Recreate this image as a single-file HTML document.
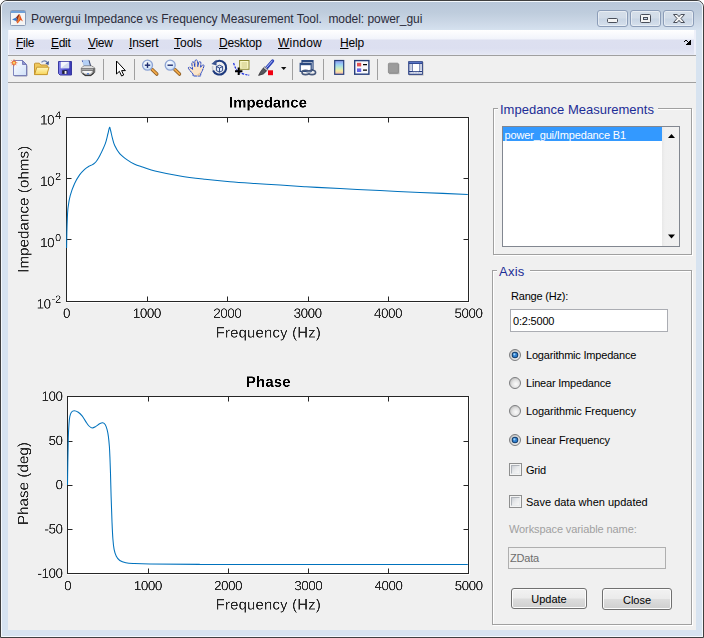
<!DOCTYPE html>
<html>
<head>
<meta charset="utf-8">
<title>Powergui Impedance vs Frequency Measurement Tool</title>
<style>
html,body{margin:0;padding:0;background:#fff;}
body{width:704px;height:638px;position:relative;overflow:hidden;font-family:"Liberation Sans",sans-serif;}
.abs{position:absolute;}
#win{position:absolute;left:0;top:0;width:702px;height:636px;border:1px solid #3f3f3f;border-radius:7px 7px 0 0;
 background:linear-gradient(#b8c7d9 0px,#bfcddd 12px,#ccd8e7 22px,#d7e3f0 30px,#d7e3f0 100%);}
#winhi{position:absolute;left:1px;top:1px;width:702px;height:636px;border:1px solid #f4f8fc;border-radius:6px 6px 0 0;box-sizing:border-box;}
#title{position:absolute;left:31px;top:12px;font-size:12px;line-height:15px;color:#2b2b3a;white-space:pre;letter-spacing:-0.05px;}
#client{position:absolute;left:8px;top:30px;width:688px;height:600px;background:#f0f0f0;}
#menubar{position:absolute;left:0;top:0;width:688px;height:25px;
 background:linear-gradient(#ffffff 0px,#f2f4fb 9px,#dde0f0 10px,#dcdff0 18px,#e4e7f4 24px,#ebedf7 25px);box-shadow:inset 1px 0 0 #f4f6fc, inset -2px 0 0 #eef0f9;}
#menubar span{position:absolute;top:6px;letter-spacing:-0.3px;font-size:12px;line-height:15px;color:#000;}
#menubar u{text-decoration:underline;text-underline-offset:1px;}
.hline{position:absolute;left:0;width:688px;height:1px;background:#a0a0a0;}
.tsep{position:absolute;top:31px;width:1px;height:20px;background:#a0a0a0;}
.ax{position:absolute;box-sizing:border-box;border:1px solid #262626;background:#fff;}
.tl{position:absolute;font-size:13px;line-height:15px;color:#262626;white-space:nowrap;}
.al{position:absolute;font-size:15px;line-height:17px;color:#262626;white-space:nowrap;}
.tt{position:absolute;font-size:15px;line-height:17px;color:#000;font-weight:bold;white-space:nowrap;}
.ui{position:absolute;font-size:11px;line-height:13px;color:#000;white-space:nowrap;letter-spacing:-0.2px;}
.ptitle{position:absolute;font-size:13px;line-height:15px;color:#1c2d96;background:#f0f0f0;white-space:nowrap;padding:0 3px 0 2px;}
.panel{position:absolute;box-sizing:border-box;border:1px solid #a0a0a0;box-shadow:1px 1px 0 #fff, inset 1px 1px 0 #fff;}
</style>
</head>
<body>
<div id="win"></div>
<div id="winhi"></div>
<div id="title">Powergui Impedance vs Frequency Measurement Tool.  model: power_gui</div>
<!--CAPTION-->
<div class="abs" style="left:597px;top:10px;width:31px;height:17px;box-sizing:border-box;border:1px solid #8c9db8;border-radius:3px;background:linear-gradient(rgba(255,255,255,.38) 0,rgba(255,255,255,.22) 7px,rgba(255,255,255,.02) 8px,rgba(255,255,255,.12) 15px);box-shadow:inset 0 0 0 1px rgba(255,255,255,.45)"></div>
<div class="abs" style="left:630px;top:10px;width:31px;height:17px;box-sizing:border-box;border:1px solid #8c9db8;border-radius:3px;background:linear-gradient(rgba(255,255,255,.38) 0,rgba(255,255,255,.22) 7px,rgba(255,255,255,.02) 8px,rgba(255,255,255,.12) 15px);box-shadow:inset 0 0 0 1px rgba(255,255,255,.45)"></div>
<div class="abs" style="left:663px;top:10px;width:31px;height:17px;box-sizing:border-box;border:1px solid #8c9db8;border-radius:3px;background:linear-gradient(rgba(255,255,255,.38) 0,rgba(255,255,255,.22) 7px,rgba(255,255,255,.02) 8px,rgba(255,255,255,.12) 15px);box-shadow:inset 0 0 0 1px rgba(255,255,255,.45)"></div>
<svg class="abs" style="left:597px;top:10px" width="97" height="17" viewBox="0 0 97 17"><rect x="10.5" y="8.5" width="10" height="4" rx="1" fill="#f4f4f4" stroke="#4a4f5a" stroke-width="1"/><rect x="43.5" y="4.5" width="10" height="8" rx="1" fill="#f4f4f4" stroke="#4a4f5a" stroke-width="1"/><rect x="46.5" y="7.5" width="4" height="2" fill="#c9d6e6" stroke="#4a4f5a" stroke-width="1"/><path d="M76.5 4.5 h3.7 l1.8 2.2 l1.8 -2.2 h3.7 l-3.5 4 l3.5 4 h-3.7 l-1.8 -2.2 l-1.8 2.2 h-3.7 l3.5 -4 z" fill="#f4f4f4" stroke="#4a4f5a" stroke-width="1" stroke-linejoin="round"/></svg>
<svg class="abs" style="left:10px;top:10px" width="16" height="16" viewBox="0 0 16 16"><rect x="0.5" y="0.5" width="15" height="15" rx="1" fill="#f4f4f4" stroke="#8a9ab5"/><rect x="1" y="1" width="14" height="2" fill="#6fa0d8"/><path d="M2 9.5 L6 7.5 L7.5 9.5 L6 11 Z" fill="#3c78c8"/><path d="M6 7.5 L8.5 4.5 L9.5 4 L8 10 L7 12 L6 11 L7.5 9.5 Z" fill="#8a2c1c"/><path d="M9.5 4 C10.3 5 11 8 13 11.5 C12 11 11 10 10.5 10 C9.5 11 8.5 13 7 13.5 C6.5 13 7 12 7 12 L8 10 Z" fill="#e8541c"/><path d="M9.5 4.2 C9.8 6 9.6 8.5 9 10.5 C8.5 11.5 7.8 12.8 7.2 13.2 C8.5 12 8.8 8 9.5 4.2 Z" fill="#f9b233"/></svg>
<!--/CAPTION-->
<div id="client">
<div id="menubar">
<span style="left:8px"><u>F</u>ile</span>
<span style="left:43px"><u>E</u>dit</span>
<span style="left:80px"><u>V</u>iew</span>
<span style="left:121px;letter-spacing:-0.1px"><u>I</u>nsert</span>
<span style="left:166px;letter-spacing:0"><u>T</u>ools</span>
<span style="left:211px;letter-spacing:-0.2px"><u>D</u>esktop</span>
<span style="left:270px;letter-spacing:0.2px"><u>W</u>indow</span>
<span style="left:332px;letter-spacing:-0.2px"><u>H</u>elp</span>
</div>
<div class="hline" style="top:25px"></div>
<div class="hline" style="top:52px"></div>
</div>
<!--TOOLBAR-->
<svg class="abs" style="left:8px;top:56px" width="688" height="26" viewBox="8 56 688 26">
<defs><linearGradient id="gpage" x1="0" y1="0" x2="1" y2="1"><stop offset="0" stop-color="#ffffff"/><stop offset="1" stop-color="#cfe0f8"/></linearGradient><linearGradient id="gfold" x1="0" y1="0" x2="0" y2="1"><stop offset="0" stop-color="#fff8c0"/><stop offset="1" stop-color="#f8d458"/></linearGradient><linearGradient id="gflop" x1="0" y1="0" x2="1" y2="0"><stop offset="0" stop-color="#8484ee"/><stop offset="0.5" stop-color="#4c4ccc"/><stop offset="1" stop-color="#3a3ab4"/></linearGradient><linearGradient id="gcb" x1="0" y1="0" x2="0" y2="1"><stop offset="0" stop-color="#8a94ec"/><stop offset="0.3" stop-color="#9ad4f4"/><stop offset="0.55" stop-color="#c8ecc8"/><stop offset="0.75" stop-color="#f6eca0"/><stop offset="1" stop-color="#f2b0b4"/></linearGradient><radialGradient id="glens" cx="0.4" cy="0.35" r="0.7"><stop offset="0" stop-color="#ffffff"/><stop offset="1" stop-color="#c4dcf8"/></radialGradient></defs>
<rect x="103" y="59" width="1" height="21" fill="#a0a0a0"/>
<rect x="134" y="59" width="1" height="21" fill="#a0a0a0"/>
<rect x="292" y="59" width="1" height="21" fill="#a0a0a0"/>
<rect x="323" y="59" width="1" height="21" fill="#a0a0a0"/>
<rect x="377" y="59" width="1" height="21" fill="#a0a0a0"/>
<path d="M13.5 60.5 H22.5 L26.5 64.5 V75.5 H13.5 Z" fill="url(#gpage)" stroke="#7f86c0" stroke-width="1"/>
<path d="M22.5 60.5 V64.5 H26.5 Z" fill="#8f96d0" stroke="#6a70b0" stroke-width="0.8"/>
<path d="M14.5 76 H27 V65.5" fill="none" stroke="#6c6f9c" stroke-width="1" opacity=".7"/>
<g stroke="#e8602c" stroke-width="0.8"><path d="M14 59.4 V66.2 M10.6 62.8 H17.4 M11.6 60.4 L16.4 65.2 M16.4 60.4 L11.6 65.2"/></g>
<circle cx="14" cy="62.8" r="2.1" fill="#f07838"/><circle cx="14" cy="62.8" r="1.1" fill="#f4e070"/>
<path d="M34.5 74.5 V64 Q34.5 63.2 35.3 63.2 H39.3 L40.8 65 H46.5 Q47.3 65 47.3 65.8 V74.5 Z" fill="#f0c95c" stroke="#c49432" stroke-width="1"/>
<path d="M34.6 74.6 L36.8 67.2 H49 L47 74.6 Z" fill="url(#gfold)" stroke="#c89a30" stroke-width="1" stroke-linejoin="round"/>
<path d="M41.5 62.4 Q44.5 59.3 47.6 62.6" fill="none" stroke="#6f84b0" stroke-width="1.3"/>
<path d="M49 61 L48.6 65.2 L45.4 63.4 Z" fill="#3f5a98"/>
<path d="M58.5 61.5 H71.5 V75 H60 L58.5 73.5 Z" fill="url(#gflop)" stroke="#3a3aa0" stroke-width="1"/>
<rect x="60.7" y="61.8" width="8.4" height="6.4" fill="#f4f6fc"/>
<path d="M60.7 68.2 L69.1 61.8 V68.2 Z" fill="#d4dcf0"/>
<rect x="62.2" y="70.3" width="5.2" height="3.6" fill="#1c1c30"/>
<rect x="64.6" y="71" width="1.9" height="2.9" fill="#f0f0f8"/>
<path d="M82.3 60.4 L89 60.2 L90.6 66 L84.2 66.8 Z" fill="#b4d0f6" stroke="#9ab4e0" stroke-width="0.5"/>
<path d="M89 60.2 L90.6 66" stroke="#3c4468" stroke-width="1"/>
<path d="M82.3 60.4 L82.6 62" stroke="#5060b0" stroke-width="0.9"/>
<path d="M81.3 68 L84 65.9 L91.6 65.9 L94.8 68 V72.4 L90.6 75.7 H85.4 L81.3 72.6 Z" fill="#bdbdbd" stroke="#6c6c6c" stroke-width="0.8" stroke-linejoin="round"/>
<path d="M81.6 67.9 L84.1 66.2 L91.4 66.2 L94.4 67.9 Z" fill="#e2e2e2"/>
<path d="M81.6 68.7 H94.4 M82 70.4 H93" stroke="#6e6e6e" stroke-width="0.9"/>
<path d="M82.2 71 H92.4 L90.4 73.6 H84.6 Z" fill="#f6f6f6"/>
<path d="M93.2 68.4 L94.8 68.2 V72.4 L92.4 74.4 Z" fill="#686868"/>
<path d="M82.6 73.4 L85.4 75.4 H90.6 L93.6 73.2" fill="none" stroke="#3a3a3a" stroke-width="1.2"/>
<rect x="87" y="73.2" width="2" height="1.2" fill="#4a78d0"/>
<path d="M116.5 61 V74 L119.4 71.3 L121.6 76 L123.7 75 L121.6 70.6 H125.4 Z" fill="#fff" stroke="#000" stroke-width="1" stroke-linejoin="miter"/>
<path d="M152.1 69.6 L156.8 74.1" stroke="#8a5a20" stroke-width="3.4" stroke-linecap="round"/><path d="M152.3 69.6 L156.7 73.9" stroke="#f0a848" stroke-width="2" stroke-linecap="round"/><circle cx="147.5" cy="65.2" r="5" fill="url(#glens)" stroke="#8ea4d4" stroke-width="1.3"/><path d="M144.8 65.2 h5.4" stroke="#1c2c70" stroke-width="1.4"/><path d="M147.5 62.5 v5.4" stroke="#1c2c70" stroke-width="1.4"/>
<path d="M174.8 69.6 L179.5 74.1" stroke="#8a5a20" stroke-width="3.4" stroke-linecap="round"/><path d="M175 69.6 L179.4 73.9" stroke="#f0a848" stroke-width="2" stroke-linecap="round"/><circle cx="170.2" cy="65.2" r="5" fill="url(#glens)" stroke="#8ea4d4" stroke-width="1.3"/><path d="M167.5 65.2 h5.4" stroke="#1c2c70" stroke-width="1.4"/>
<path d="M193.2 76 L193 74 L190.2 70.8 L188.5 68.6 Q188 67.1 189.4 67 L191.4 68.4 L192.6 69.6 L191.8 63.4 Q192 61.7 193.1 61.8 Q194 62 194.2 63.2 L194.8 66.6 L194.9 61.2 Q195.2 59.9 196.3 59.9 Q197.4 60 197.6 61.4 L197.8 66.6 L198.6 62.8 Q199 61.4 200 61.6 Q201 61.9 200.9 63.2 L200.6 67.4 L202 65.6 Q202.8 64.4 203.6 64.9 Q204.2 65.4 203.8 66.6 L202.4 70.6 L200.8 73.6 L200.6 76 Z" fill="#fbe4c8" stroke="#2446c4" stroke-width="1" stroke-dasharray="3.2 0.5" stroke-linejoin="round"/>
<path d="M196 75.6 L199.6 75.6 L200 72.6 Z" fill="#e8c088" opacity=".8"/>
<path d="M214.2 63 A6.9 6.9 0 1 1 213 70.4" fill="none" stroke="#1d3a7e" stroke-width="2.1"/>
<path d="M213 70.4 A6.9 6.9 0 0 1 212.7 66" fill="none" stroke="#c8ccd4" stroke-width="1.6"/>
<path d="M211.4 64 L216.4 59.8 L216.6 65.6 Z" fill="#3a5490"/>
<path d="M216.4 66.6 L219.6 65.2 L222.6 66.6 V70.6 L219.5 72.2 L216.4 70.6 Z M216.4 66.6 L219.5 68 L222.6 66.6 M219.5 68 V72.2" fill="#dfe8f8" stroke="#1d3a7e" stroke-width="0.9" stroke-linejoin="round"/>
<path d="M233.6 63 Q236 71.5 241 73.2 T249.2 75.2" fill="none" stroke="#1428e0" stroke-width="1.2" stroke-dasharray="2.2 1.2"/>
<rect x="239.6" y="60.5" width="9.4" height="8.8" fill="#faf8c8" stroke="#8e8a34" stroke-width="1"/>
<path d="M241.4 63 h5.8 M241.4 65 h5.8 M241.4 67 h5.8" stroke="#b4b060" stroke-width="0.7"/>
<path d="M235 71.3 h7.4 M238.7 67.6 v7.4" stroke="#000" stroke-width="2"/>
<path d="M272.6 61 L266.2 68.4" stroke="#2a40b8" stroke-width="3.2" stroke-linecap="round"/>
<path d="M272.2 61 L266.4 67.6" stroke="#b8c6f8" stroke-width="1" stroke-linecap="round"/>
<path d="M264.6 66.6 L267.8 69.4 L266.4 71 L263.2 68.2 Z" fill="#c0c0c8" stroke="#60606c" stroke-width="0.7"/>
<path d="M263.2 68.2 L266.4 71 Q264.4 74.6 258.6 75.4 Q260.4 71.2 263.2 68.2 Z" fill="#55555c" stroke="#2c2c30" stroke-width="0.7"/>
<rect x="268" y="70.3" width="5" height="4.9" fill="#f00010"/>
<path d="M281 67 h5.4 l-2.7 3 Z" fill="#101010"/>
<rect x="302" y="60.6" width="11" height="9" fill="#fff" stroke="#2c4a80" stroke-width="1.2"/>
<rect x="302" y="60.3" width="11" height="2" fill="#2c4a80"/>
<rect x="300.2" y="63.4" width="11" height="8" fill="#fff" stroke="#2c4a80" stroke-width="1.2"/>
<rect x="300.2" y="63.2" width="11" height="2" fill="#2c4a80"/>
<ellipse cx="305.6" cy="72.4" rx="3.6" ry="2.2" fill="none" stroke="#46587c" stroke-width="1.6"/>
<ellipse cx="312" cy="72.4" rx="3.6" ry="2.2" fill="none" stroke="#46587c" stroke-width="1.6"/>
<path d="M306.4 72.4 h4.8" stroke="#a8b4c8" stroke-width="1.4"/>
<rect x="334.7" y="60.5" width="9" height="13.8" fill="url(#gcb)" stroke="#27407c" stroke-width="1.2"/>
<rect x="354.7" y="60.6" width="14.2" height="13.6" fill="#f8f9fd" stroke="#27407c" stroke-width="1.4"/>
<rect x="357" y="62.8" width="4.2" height="3.6" fill="#e25252"/>
<rect x="357" y="68.4" width="4.2" height="3.6" fill="#6464e4"/>
<path d="M363 64.6 h4 M363 70.2 h4" stroke="#000" stroke-width="1.2"/>
<rect x="389" y="64" width="10.4" height="10.2" fill="#8e8e8e" opacity=".6"/>
<rect x="388.4" y="63.2" width="10" height="10" fill="#9c9c9c" stroke="#8a8a8a" stroke-width="0.9" rx="1"/>
<rect x="388.9" y="63.7" width="9" height="1.4" fill="#9a9a9a"/>
<rect x="409" y="62" width="14.6" height="13.6" fill="#808080" opacity=".45"/>
<rect x="408.2" y="61.2" width="14.6" height="13.6" fill="#22397f"/>
<rect x="409.2" y="62" width="12.6" height="1.3" fill="#5874c4"/>
<rect x="409.4" y="64" width="2.6" height="7" fill="#e4e8f4"/><rect x="419.6" y="64" width="2.4" height="7" fill="#e4e8f4"/><rect x="409.4" y="72" width="12.6" height="1.8" fill="#e4e8f4"/>
<path d="M409.6 65 h2.2 M409.6 67 h2.2 M409.6 69 h2.2 M419.8 65 h2 M419.8 67 h2 M419.8 69 h2" stroke="#9aa4c4" stroke-width="0.8"/>
<path d="M410 72.9 h11.6" stroke="#8894b8" stroke-width="0.8" stroke-dasharray="0.8 0.8"/>
<rect x="412.6" y="64" width="6.6" height="7.2" fill="#ffffff"/>
</svg>
<svg class="abs" style="left:683px;top:39px" width="9" height="7" viewBox="0 0 9 7" shape-rendering="crispEdges" fill="#000"><rect x="2" y="1" width="1" height="1"/><rect x="3" y="1" width="1" height="1"/><rect x="7" y="1" width="1" height="1"/><rect x="1" y="2" width="1" height="1"/><rect x="4" y="2" width="1" height="1"/><rect x="6" y="2" width="1" height="1"/><rect x="7" y="2" width="1" height="1"/><rect x="5" y="3" width="1" height="1"/><rect x="6" y="3" width="1" height="1"/><rect x="7" y="3" width="1" height="1"/><rect x="4" y="4" width="1" height="1"/><rect x="5" y="4" width="1" height="1"/><rect x="6" y="4" width="1" height="1"/><rect x="7" y="4" width="1" height="1"/><rect x="3" y="5" width="1" height="1"/><rect x="4" y="5" width="1" height="1"/><rect x="5" y="5" width="1" height="1"/><rect x="6" y="5" width="1" height="1"/><rect x="7" y="5" width="1" height="1"/></svg>
<!--/TOOLBAR-->
<!--PANELS-->
<div class="abs" style="left:494px;top:109px;width:199px;height:147px;box-sizing:border-box;border:1px solid #fff"></div><div class="abs" style="left:493px;top:108px;width:199px;height:147px;box-sizing:border-box;border:1px solid #a0a0a0"></div>
<div class="ptitle" style="left:498px;top:102px;padding-right:4px">Impedance Measurements</div>
<div class="abs" style="left:502px;top:126px;width:178px;height:121px;box-sizing:border-box;border:1px solid #828790;background:#fff"></div>
<div class="abs" style="left:503px;top:127px;width:159px;height:14px;background:#3399ff"></div>
<div class="ui" style="left:504.5px;top:129px;color:#fff;letter-spacing:-0.15px">power_gui/Impedance B1</div>
<div class="abs" style="left:662px;top:127px;width:17px;height:119px;background:linear-gradient(90deg,#e8e8e8,#f0f0f0 3px,#f1f1f1)"></div>
<svg class="abs" style="left:662px;top:127px" width="17" height="119"><path d="M6 11 L9.5 7 L13 11 Z" fill="#000"/><path d="M6 107.5 L13 107.5 L9.5 111.5 Z" fill="#000"/></svg>
<div class="abs" style="left:493px;top:271px;width:200px;height:355px;box-sizing:border-box;border:1px solid #fff"></div><div class="abs" style="left:492px;top:270px;width:200px;height:355px;box-sizing:border-box;border:1px solid #a0a0a0"></div>
<div class="ptitle" style="left:497px;top:264px;letter-spacing:0.25px;padding-right:5px">Axis</div>
<div class="ui" style="left:511px;top:290px">Range (Hz):</div>
<div class="abs" style="left:510px;top:309px;width:158px;height:23px;box-sizing:border-box;border:1px solid #abadb3;border-top-color:#abadb3;background:#fff"></div>
<div class="ui" style="left:513px;top:315px">0:2:5000</div>
<svg class="abs" style="left:508px;top:348px" width="14" height="14" viewBox="0 0 14 14"><defs><radialGradient id="rg355" cx="0.58" cy="0.6" r="0.6"><stop offset="0" stop-color="#fbfbfb"/><stop offset="0.55" stop-color="#e4e4e4"/><stop offset="1" stop-color="#bfbfbf"/></radialGradient></defs><circle cx="7" cy="7" r="5.5" fill="url(#rg355)" stroke="#7d7e80" stroke-width="1"/><circle cx="7" cy="7" r="3.3" fill="#17406e"/><circle cx="7" cy="7" r="2.3" fill="#2f7fd0"/><circle cx="6.4" cy="6.3" r="1.1" fill="#9fd4f8"/></svg>
<div class="ui" style="left:526px;top:349px;letter-spacing:-0.2px">Logarithmic Impedance</div>
<svg class="abs" style="left:508px;top:376px" width="14" height="14" viewBox="0 0 14 14"><defs><radialGradient id="rg383" cx="0.58" cy="0.6" r="0.6"><stop offset="0" stop-color="#fbfbfb"/><stop offset="0.55" stop-color="#e4e4e4"/><stop offset="1" stop-color="#bfbfbf"/></radialGradient></defs><circle cx="7" cy="7" r="5.5" fill="url(#rg383)" stroke="#7d7e80" stroke-width="1"/></svg>
<div class="ui" style="left:526px;top:377px;letter-spacing:-0.2px">Linear Impedance</div>
<svg class="abs" style="left:508px;top:404px" width="14" height="14" viewBox="0 0 14 14"><defs><radialGradient id="rg411" cx="0.58" cy="0.6" r="0.6"><stop offset="0" stop-color="#fbfbfb"/><stop offset="0.55" stop-color="#e4e4e4"/><stop offset="1" stop-color="#bfbfbf"/></radialGradient></defs><circle cx="7" cy="7" r="5.5" fill="url(#rg411)" stroke="#7d7e80" stroke-width="1"/></svg>
<div class="ui" style="left:526px;top:405px;letter-spacing:-0.1px">Logarithmic Frequency</div>
<svg class="abs" style="left:508px;top:433px" width="14" height="14" viewBox="0 0 14 14"><defs><radialGradient id="rg440" cx="0.58" cy="0.6" r="0.6"><stop offset="0" stop-color="#fbfbfb"/><stop offset="0.55" stop-color="#e4e4e4"/><stop offset="1" stop-color="#bfbfbf"/></radialGradient></defs><circle cx="7" cy="7" r="5.5" fill="url(#rg440)" stroke="#7d7e80" stroke-width="1"/><circle cx="7" cy="7" r="3.3" fill="#17406e"/><circle cx="7" cy="7" r="2.3" fill="#2f7fd0"/><circle cx="6.4" cy="6.3" r="1.1" fill="#9fd4f8"/></svg>
<div class="ui" style="left:526px;top:434px;letter-spacing:-0.1px">Linear Frequency</div>
<div class="abs" style="left:509px;top:463px;width:13px;height:13px;box-sizing:border-box;border:1px solid #8e8f8f;background:#f4f4f4"><div style="position:absolute;left:1px;top:1px;width:9px;height:9px;box-sizing:border-box;border:1px solid;border-color:#aeb3b9 #e9ecee #e9ecee #aeb3b9;background:linear-gradient(135deg,#cbcfd5,#e6e8ea 45%,#f6f6f6)"></div></div>
<div class="ui" style="left:526px;top:464px">Grid</div>
<div class="abs" style="left:509px;top:495px;width:13px;height:13px;box-sizing:border-box;border:1px solid #8e8f8f;background:#f4f4f4"><div style="position:absolute;left:1px;top:1px;width:9px;height:9px;box-sizing:border-box;border:1px solid;border-color:#aeb3b9 #e9ecee #e9ecee #aeb3b9;background:linear-gradient(135deg,#cbcfd5,#e6e8ea 45%,#f6f6f6)"></div></div>
<div class="ui" style="left:526px;top:496px;letter-spacing:0">Save data when updated</div>
<div class="ui" style="left:509px;top:523px;color:#a0a0a0;letter-spacing:-0.1px">Workspace variable name:</div>
<div class="abs" style="left:508px;top:547px;width:158px;height:22px;box-sizing:border-box;border:1px solid #afafaf;background:#f0f0f0"></div>
<div class="ui" style="left:510px;top:552px;color:#6d6d6d">ZData</div>
<div class="abs" style="left:511px;top:588px;width:76px;height:21px;box-sizing:border-box;border:1px solid #707070;border-radius:3px;background:linear-gradient(#f2f2f2 0%,#ebebeb 48%,#dddddd 52%,#cfcfcf 100%);box-shadow:inset 0 0 0 1px #fcfcfc;font-size:11px;line-height:21px;text-align:center;color:#000">Update</div>
<div class="abs" style="left:602px;top:588px;width:70px;height:22px;box-sizing:border-box;border:1px solid #707070;border-radius:3px;background:linear-gradient(#f2f2f2 0%,#ebebeb 48%,#dddddd 52%,#cfcfcf 100%);box-shadow:inset 0 0 0 1px #fcfcfc;font-size:11px;line-height:22px;text-align:center;color:#000">Close</div>
<!--/PANELS-->
<!--AXES-->
<svg class="abs" style="left:0;top:0" width="704" height="638" viewBox="0 0 704 638">
<rect x="66" y="117" width="403.8" height="185.9" fill="#fff"/><rect x="66.5" y="117.5" width="402" height="184" fill="none" stroke="#262626" stroke-width="1" shape-rendering="crispEdges"/><rect x="147" y="296.5" width="1" height="4.5" fill="#262626"/><rect x="147" y="118" width="1" height="4.5" fill="#262626"/><rect x="227" y="296.5" width="1" height="4.5" fill="#262626"/><rect x="227" y="118" width="1" height="4.5" fill="#262626"/><rect x="308" y="296.5" width="1" height="4.5" fill="#262626"/><rect x="308" y="118" width="1" height="4.5" fill="#262626"/><rect x="388" y="296.5" width="1" height="4.5" fill="#262626"/><rect x="388" y="118" width="1" height="4.5" fill="#262626"/><rect x="67" y="178" width="4.5" height="1" fill="#262626"/><rect x="463.5" y="178" width="4.5" height="1" fill="#262626"/><rect x="67" y="239" width="4.5" height="1" fill="#262626"/><rect x="463.5" y="239" width="4.5" height="1" fill="#262626"/>
<rect x="67" y="396" width="402.8" height="178.9" fill="#fff"/><rect x="67.5" y="396.5" width="401" height="177" fill="none" stroke="#262626" stroke-width="1" shape-rendering="crispEdges"/><rect x="148" y="568.5" width="1" height="4.5" fill="#262626"/><rect x="148" y="397" width="1" height="4.5" fill="#262626"/><rect x="228" y="568.5" width="1" height="4.5" fill="#262626"/><rect x="228" y="397" width="1" height="4.5" fill="#262626"/><rect x="308" y="568.5" width="1" height="4.5" fill="#262626"/><rect x="308" y="397" width="1" height="4.5" fill="#262626"/><rect x="388" y="568.5" width="1" height="4.5" fill="#262626"/><rect x="388" y="397" width="1" height="4.5" fill="#262626"/><rect x="68" y="441" width="4.5" height="1" fill="#262626"/><rect x="463.5" y="441" width="4.5" height="1" fill="#262626"/><rect x="68" y="485" width="4.5" height="1" fill="#262626"/><rect x="463.5" y="485" width="4.5" height="1" fill="#262626"/><rect x="68" y="529" width="4.5" height="1" fill="#262626"/><rect x="463.5" y="529" width="4.5" height="1" fill="#262626"/>
<path d="M66.60 248.00 C66.67 244.00 66.71 240.00 66.80 236.00 C66.91 231.33 67.00 226.66 67.20 222.00 C67.40 217.33 67.47 212.64 68.00 208.00 C68.47 203.84 69.12 199.64 70.20 195.60 C71.29 191.54 72.76 187.53 74.50 183.70 C75.90 180.63 77.66 177.66 79.60 174.90 C81.03 172.86 82.78 170.99 84.60 169.30 C85.91 168.09 87.46 167.10 89.00 166.20 C89.96 165.64 91.12 165.43 92.10 164.90 C92.98 164.43 93.87 163.88 94.60 163.20 C95.54 162.32 96.35 161.26 97.10 160.20 C98.02 158.89 98.89 157.53 99.60 156.10 C101.63 152.00 103.71 147.88 105.30 143.60 C106.51 140.34 107.11 136.87 108.00 133.50 C108.54 131.44 109.03 127.96 109.60 127.30 C109.90 126.96 110.32 129.42 110.60 130.50 C111.19 132.75 111.59 135.05 112.20 137.30 C112.95 140.05 113.52 142.93 114.70 145.50 C116.02 148.36 117.65 151.23 119.70 153.60 C121.81 156.03 124.55 158.01 127.20 159.90 C129.55 161.58 132.08 163.09 134.70 164.30 C137.18 165.45 139.89 166.14 142.50 167.00 C146.65 168.37 150.75 169.98 155.00 171.00 C163.25 172.98 171.62 174.62 180.00 176.00 C188.29 177.37 196.65 178.29 205.00 179.25 C213.32 180.21 221.66 181.04 230.00 181.75 C238.32 182.46 246.66 182.96 255.00 183.50 C263.33 184.04 271.67 184.47 280.00 185.00 C288.67 185.55 297.33 186.23 306.00 186.75 C317.33 187.43 328.67 188.01 340.00 188.60 C353.33 189.29 366.67 189.97 380.00 190.60 C393.33 191.23 406.67 191.82 420.00 192.40 C435.93 193.09 451.87 193.73 467.80 194.40" stroke="#0072bd" stroke-width="1.05" fill="none" stroke-linejoin="round"/>
<path d="M67.50 485.00 C67.57 480.00 67.62 475.00 67.70 470.00 C67.88 459.30 68.01 448.60 68.30 437.90 C68.41 433.70 68.60 429.49 68.90 425.30 C69.10 422.39 69.26 419.44 69.80 416.60 C70.09 415.08 70.53 413.37 71.40 412.20 C71.99 411.41 73.23 410.70 74.20 410.70 C75.53 410.70 77.11 411.42 78.30 412.20 C79.74 413.15 81.00 414.53 82.10 415.90 C83.50 417.66 84.52 419.73 85.80 421.60 C86.82 423.10 87.74 424.74 89.00 426.00 C89.84 426.84 91.02 427.84 92.10 427.90 C93.32 427.97 94.71 427.05 95.90 426.40 C97.21 425.68 98.28 424.49 99.60 423.80 C100.58 423.29 101.82 422.65 102.80 422.80 C103.72 422.95 104.77 423.85 105.30 424.70 C106.20 426.15 106.65 427.99 107.10 429.70 C107.69 431.96 108.09 434.28 108.40 436.60 C108.85 439.95 109.16 443.33 109.40 446.70 C109.69 450.86 109.83 455.03 110.00 459.20 C110.20 464.00 110.36 468.80 110.50 473.60 C110.72 481.03 110.87 488.47 111.10 495.90 C111.37 504.50 111.64 513.10 112.00 521.70 C112.24 527.47 112.46 533.24 112.90 539.00 C113.16 542.44 113.43 545.92 114.10 549.30 C114.57 551.66 115.22 554.09 116.30 556.20 C117.12 557.82 118.33 559.48 119.80 560.50 C121.50 561.68 123.72 562.36 125.80 562.80 C128.59 563.39 131.53 563.45 134.40 563.60 C139.59 563.88 144.80 564.04 150.00 564.10 C166.66 564.30 183.33 564.38 200.00 564.40 C289.27 564.51 378.53 564.47 467.80 564.50" stroke="#0072bd" stroke-width="1.05" fill="none" stroke-linejoin="round"/>
</svg>
<div id="axtext" style="position:absolute;left:0;top:0;width:1952px;height:2520px;transform:scale(0.25);transform-origin:0 0;will-change:transform;color:#262626;line-height:1;white-space:nowrap;pointer-events:none">
<div style="position:absolute;font-size:53.32px;letter-spacing:-1.64px;left:-534.02px;top:1226.46px;width:1600px;text-align:center;">0</div>
<div style="position:absolute;font-size:53.32px;letter-spacing:-1.64px;left:-529.22px;top:2315.66px;width:1600px;text-align:center;">0</div>
<div style="position:absolute;font-size:53.32px;letter-spacing:-1.64px;left:-212.42px;top:1226.46px;width:1600px;text-align:center;">1000</div>
<div style="position:absolute;font-size:53.32px;letter-spacing:-1.64px;left:-208.42px;top:2315.66px;width:1600px;text-align:center;">1000</div>
<div style="position:absolute;font-size:53.32px;letter-spacing:-1.64px;left:109.18px;top:1226.46px;width:1600px;text-align:center;">2000</div>
<div style="position:absolute;font-size:53.32px;letter-spacing:-1.64px;left:112.38px;top:2315.66px;width:1600px;text-align:center;">2000</div>
<div style="position:absolute;font-size:53.32px;letter-spacing:-1.64px;left:430.78px;top:1226.46px;width:1600px;text-align:center;">3000</div>
<div style="position:absolute;font-size:53.32px;letter-spacing:-1.64px;left:433.18px;top:2315.66px;width:1600px;text-align:center;">3000</div>
<div style="position:absolute;font-size:53.32px;letter-spacing:-1.64px;left:752.38px;top:1226.46px;width:1600px;text-align:center;">4000</div>
<div style="position:absolute;font-size:53.32px;letter-spacing:-1.64px;left:753.98px;top:2315.66px;width:1600px;text-align:center;">4000</div>
<div style="position:absolute;font-size:53.32px;letter-spacing:-1.64px;left:1073.98px;top:1226.46px;width:1600px;text-align:center;">5000</div>
<div style="position:absolute;font-size:53.32px;letter-spacing:-1.64px;left:1074.78px;top:2315.66px;width:1600px;text-align:center;">5000</div>
<div style="position:absolute;font-size:53.32px;letter-spacing:-1.64px;left:-1356.04px;top:452.865px;width:1600px;text-align:right;">10<span style="font-size:42.68px;position:relative;top:-23.2px;letter-spacing:-0.2px;margin-left:4px">4</span></div>
<div style="position:absolute;font-size:53.32px;letter-spacing:-1.64px;left:-1356.04px;top:698.185px;width:1600px;text-align:right;">10<span style="font-size:42.68px;position:relative;top:-23.2px;letter-spacing:-0.2px;margin-left:4px">2</span></div>
<div style="position:absolute;font-size:53.32px;letter-spacing:-1.64px;left:-1356.04px;top:943.545px;width:1600px;text-align:right;">10<span style="font-size:42.68px;position:relative;top:-23.2px;letter-spacing:-0.2px;margin-left:4px">0</span></div>
<div style="position:absolute;font-size:53.32px;letter-spacing:-1.64px;left:-1356.04px;top:1188.86px;width:1600px;text-align:right;">10<span style="font-size:42.68px;position:relative;top:-23.2px;letter-spacing:-0.2px;margin-left:4px">-2</span></div>
<div style="position:absolute;font-size:53.32px;letter-spacing:-1.64px;left:-1349.64px;top:1558.06px;width:1600px;text-align:right;">100</div>
<div style="position:absolute;font-size:53.32px;letter-spacing:-1.64px;left:-1349.64px;top:1735.06px;width:1600px;text-align:right;">50</div>
<div style="position:absolute;font-size:53.32px;letter-spacing:-1.64px;left:-1349.64px;top:1912.06px;width:1600px;text-align:right;">0</div>
<div style="position:absolute;font-size:53.32px;letter-spacing:-1.64px;left:-1349.64px;top:2089.06px;width:1600px;text-align:right;">-50</div>
<div style="position:absolute;font-size:53.32px;letter-spacing:-1.64px;left:-1349.64px;top:2266.06px;width:1600px;text-align:right;">-100</div>
<div style="position:absolute;font-size:58.68px;letter-spacing:0.6px;font-weight:bold;color:#000;left:272.3px;top:380.727px;width:1600px;text-align:center;">Impedance</div>
<div style="position:absolute;font-size:58.68px;letter-spacing:1.2px;font-weight:bold;color:#000;left:273.8px;top:1497.53px;width:1600px;text-align:center;">Phase</div>
<div style="position:absolute;font-size:58.68px;letter-spacing:1.2px;left:273.6px;top:1300.73px;width:1600px;text-align:center;">Frequency (Hz)</div>
<div style="position:absolute;font-size:58.68px;letter-spacing:1.2px;left:273.6px;top:2388.73px;width:1600px;text-align:center;">Frequency (Hz)</div>
<div style="position:absolute;font-size:60px;letter-spacing:0.52px;left:-705.59px;top:806.8px;width:1600px;text-align:center;transform:rotate(-90deg);">Impedance (ohms)</div>
<div style="position:absolute;font-size:60px;letter-spacing:0.48px;left:-707.19px;top:1904px;width:1600px;text-align:center;transform:rotate(-90deg);">Phase (deg)</div>
</div>
<!--/AXES-->
</body>
</html>
